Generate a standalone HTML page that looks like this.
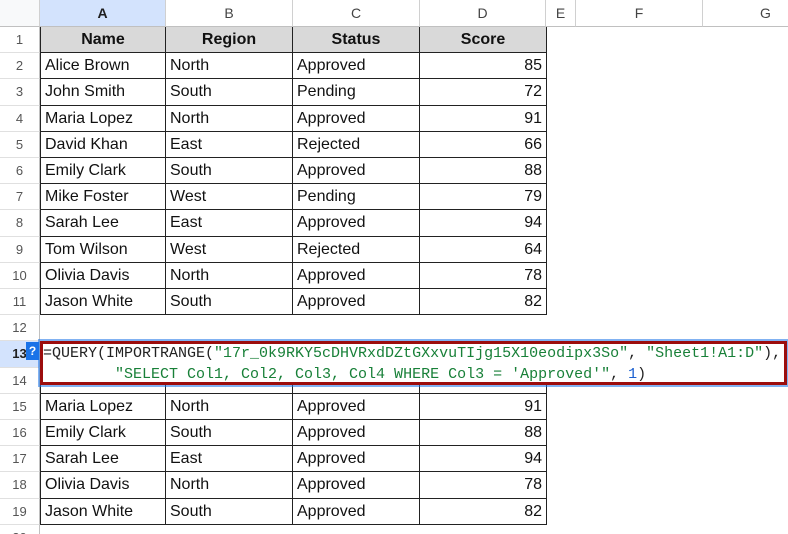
<!DOCTYPE html>
<html><head><style>
html,body{margin:0;width:788px;height:534px;overflow:hidden}
body{background:#fff;font-family:"Liberation Sans",Arial,sans-serif;position:relative}
.a{position:absolute}
.ch{top:0;height:27px;line-height:27px;text-align:center;font-size:14px;color:#444;border-right:1px solid #d0d0d0;border-bottom:1px solid #c0c0c0;box-sizing:border-box;background:#fff}
.rh{left:0;width:40px;font-size:13px;color:#555;text-align:center;border-right:1px solid #c0c0c0;border-bottom:1px solid #e0e0e0;box-sizing:border-box;height:26.2px;line-height:26px}
.r{left:40px;height:26.2px;display:flex}
.c{box-sizing:border-box;border-right:1px solid #222;border-bottom:1px solid #222;font-size:16px;color:#111;line-height:25px;padding:0 4px;white-space:nowrap;overflow:hidden}
.w1{width:126px}.w2{width:127px}.w3{width:127px}.w4{width:127px;text-align:right}
.h .c{background:#d9d9d9;font-weight:bold;text-align:center;font-size:16px}
.first{border-left:1px solid #222}
.mono{font-family:"Liberation Mono",monospace;font-size:15px;white-space:pre;color:#222}
.g{color:#188038}.b{color:#1a5fd0}
</style></head><body>
<div class="a ch" style="left:0;width:40px;background:#f8f9fa"></div>
<div class="a ch" style="left:40px;width:126px;background:#d3e3fd;font-weight:bold;color:#1f1f1f">A</div>
<div class="a ch" style="left:166px;width:127px">B</div>
<div class="a ch" style="left:293px;width:127px">C</div>
<div class="a ch" style="left:420px;width:126px">D</div>
<div class="a ch" style="left:546px;width:30px">E</div>
<div class="a ch" style="left:576px;width:127px">F</div>
<div class="a ch" style="left:703px;width:126px">G</div>

<div class="a rh" style="top:27px">1</div>
<div class="a rh" style="top:53.2px">2</div>
<div class="a rh" style="top:79.4px">3</div>
<div class="a rh" style="top:105.6px">4</div>
<div class="a rh" style="top:131.8px">5</div>
<div class="a rh" style="top:158px">6</div>
<div class="a rh" style="top:184.2px">7</div>
<div class="a rh" style="top:210.4px">8</div>
<div class="a rh" style="top:236.6px">9</div>
<div class="a rh" style="top:262.8px">10</div>
<div class="a rh" style="top:289px">11</div>
<div class="a rh" style="top:315.2px">12</div>
<div class="a rh" style="top:341.4px;background:#d3e3fd;font-weight:bold;color:#1f1f1f">13</div>
<div class="a rh" style="top:367.6px">14</div>
<div class="a rh" style="top:393.8px">15</div>
<div class="a rh" style="top:420px">16</div>
<div class="a rh" style="top:446.2px">17</div>
<div class="a rh" style="top:472.4px">18</div>
<div class="a rh" style="top:498.6px">19</div>
<div class="a rh" style="top:524.8px">20</div>

<div class="a r h" style="top:27px"><div class="c w1 first">Name</div><div class="c w2">Region</div><div class="c w3">Status</div><div class="c w4" style="text-align:center">Score</div></div>
<div class="a r" style="top:53.2px"><div class="c w1 first">Alice Brown</div><div class="c w2">North</div><div class="c w3">Approved</div><div class="c w4">85</div></div>
<div class="a r" style="top:79.4px"><div class="c w1 first">John Smith</div><div class="c w2">South</div><div class="c w3">Pending</div><div class="c w4">72</div></div>
<div class="a r" style="top:105.6px"><div class="c w1 first">Maria Lopez</div><div class="c w2">North</div><div class="c w3">Approved</div><div class="c w4">91</div></div>
<div class="a r" style="top:131.8px"><div class="c w1 first">David Khan</div><div class="c w2">East</div><div class="c w3">Rejected</div><div class="c w4">66</div></div>
<div class="a r" style="top:158px"><div class="c w1 first">Emily Clark</div><div class="c w2">South</div><div class="c w3">Approved</div><div class="c w4">88</div></div>
<div class="a r" style="top:184.2px"><div class="c w1 first">Mike Foster</div><div class="c w2">West</div><div class="c w3">Pending</div><div class="c w4">79</div></div>
<div class="a r" style="top:210.4px"><div class="c w1 first">Sarah Lee</div><div class="c w2">East</div><div class="c w3">Approved</div><div class="c w4">94</div></div>
<div class="a r" style="top:236.6px"><div class="c w1 first">Tom Wilson</div><div class="c w2">West</div><div class="c w3">Rejected</div><div class="c w4">64</div></div>
<div class="a r" style="top:262.8px"><div class="c w1 first">Olivia Davis</div><div class="c w2">North</div><div class="c w3">Approved</div><div class="c w4">78</div></div>
<div class="a r" style="top:289px"><div class="c w1 first">Jason White</div><div class="c w2">South</div><div class="c w3">Approved</div><div class="c w4">82</div></div>

<div class="a r" style="top:367.6px"><div class="c w1 first"></div><div class="c w2"></div><div class="c w3"></div><div class="c w4"></div></div>
<div class="a r" style="top:393.8px"><div class="c w1 first">Maria Lopez</div><div class="c w2">North</div><div class="c w3">Approved</div><div class="c w4">91</div></div>
<div class="a r" style="top:420px"><div class="c w1 first">Emily Clark</div><div class="c w2">South</div><div class="c w3">Approved</div><div class="c w4">88</div></div>
<div class="a r" style="top:446.2px"><div class="c w1 first">Sarah Lee</div><div class="c w2">East</div><div class="c w3">Approved</div><div class="c w4">94</div></div>
<div class="a r" style="top:472.4px"><div class="c w1 first">Olivia Davis</div><div class="c w2">North</div><div class="c w3">Approved</div><div class="c w4">78</div></div>
<div class="a r" style="top:498.6px"><div class="c w1 first">Jason White</div><div class="c w2">South</div><div class="c w3">Approved</div><div class="c w4">82</div></div>

<div class="a" style="left:26px;top:342px;width:13px;height:18px;background:#1a73e8;color:#fff;font-weight:bold;font-size:12px;text-align:center;line-height:18px">?</div>
<div class="a" style="left:38px;top:339px;width:750px;height:48px;background:#1a73e8;opacity:.55"></div>
<div class="a" style="left:40px;top:341px;width:747px;height:44px;box-sizing:border-box;border:3px solid #9c0d0d;background:#fff"></div>
<div class="a mono" style="left:43px;top:343px;line-height:21px">=QUERY(IMPORTRANGE(<span class="g">"17r_0k9RKY5cDHVRxdDZtGXxvuTIjg15X10eodipx3So"</span>, <span class="g">"Sheet1!A1:D"</span>),
        <span class="g">"SELECT Col1, Col2, Col3, Col4 WHERE Col3 = 'Approved'"</span>, <span class="b">1</span>)</div>
</body></html>
